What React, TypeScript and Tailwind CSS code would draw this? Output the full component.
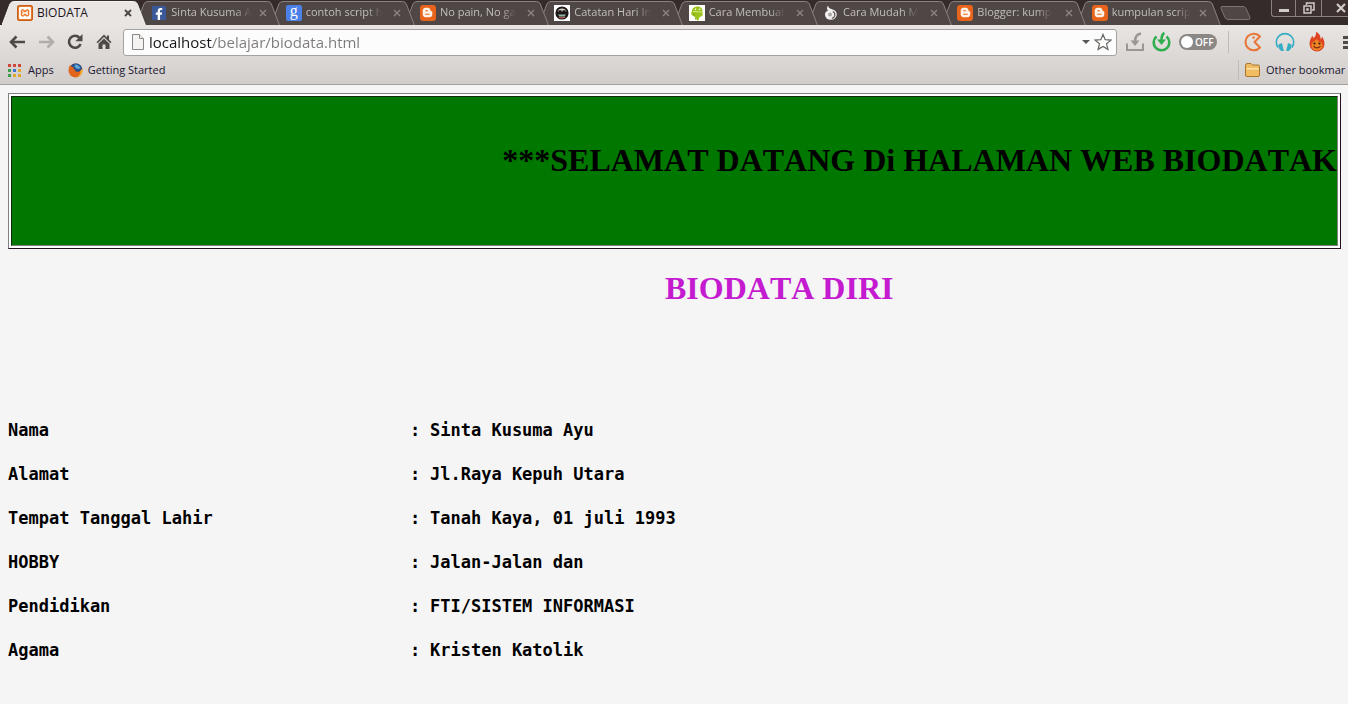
import type React from "react";
import { clsx } from "clsx";
import { FaBloggerB, FaFacebookF } from "react-icons/fa";
import { SiXampp } from "react-icons/si";

const BloggerIcon = () => (
  <span className="flex h-4 w-4 items-center justify-center rounded-[3px] bg-[#e8641b]">
    <FaBloggerB className="h-[11px] w-[11px] text-[#fdf3e8]" />
  </span>
);

const XamppIcon = () => (
  <span className="flex h-4 w-4 items-center justify-center rounded-[2px] border border-[#c8601a] bg-[#e8792d]">
    <SiXampp className="h-3 w-3 text-white" />
  </span>
);

const FacebookIcon = () => (
  <span className="flex h-[14px] w-[14px] items-end justify-center bg-[#3b5998]">
    <FaFacebookF className="h-3 w-3 text-white" />
  </span>
);

const GoogleIcon = () => (
  <span className="flex h-4 w-4 items-center justify-center rounded-[2px] bg-[#4a80e8] pb-1 font-['Liberation_Serif',serif] text-base leading-4 text-white">
    g
  </span>
);

const BadgeIcon = () => (
  <svg className="h-4 w-4" viewBox="0 0 16 16">
    <rect width="16" height="16" fill="#fff" />
    <circle cx="8" cy="8" r="6.6" fill="#1c1818" />
    <path d="M3.500 6.500c1-4 8-4 9 0z" fill="#d8d4c8" />
    <path d="M4.500 5.200h3v1.800h-3zM8.600 5.200h3v1.800h-3z" fill="#1c1818" />
    <path d="M4 9.500h8l-1.500 2h-5z" fill="#8fb5a8" />
    <path d="M5 12c2 1.300 4 1.300 6 0" stroke="#cc6655" strokeWidth="1.200" fill="none" />
  </svg>
);

const AndroidIcon = () => (
  <svg className="h-4 w-4" viewBox="0 0 16 16">
    <rect width="16" height="16" fill="#fff" />
    <path d="M3 6c0-3 2.500-4.500 5.500-4.500S13.500 3.500 13.500 6v5l-3 1-1 3.500-2-.5-.5-2.500L4 11 2 9z" fill="#9dc41c" />
    <path d="M4 6.500l9 .5" stroke="#d3e88a" strokeWidth="1" />
    <path d="M7 12l-.5 2.500M5 8v3" stroke="#7fa312" strokeWidth="1" />
    <circle cx="6.500" cy="4.300" r=".8" fill="#fff" />
    <circle cx="10.500" cy="4.300" r=".8" fill="#fff" />
  </svg>
);

const SwirlIcon = () => (
  <svg className="h-4 w-4" viewBox="0 0 16 16">
    <path d="M5 0.500c0 2.500 3 3.300 5.500 4.300C13 5.800 14 7.800 13.700 10A6 6 0 0 1 2 10.200C1.700 8 3 6.300 5 5.800 3.700 4.500 3.800 2 5 .5z" fill="#f2f0f0" />
    <path d="M9.800 6.500a3.600 3.600 0 0 1-1 6.800" stroke="#5a5553" strokeWidth="1.200" fill="none" />
    <circle cx="7" cy="9.500" r="2" fill="#aaa6a4" />
  </svg>
);

const tabs: { title: string; icon: React.ReactNode }[] = [
  { title: "BIODATA", icon: <XamppIcon /> },
  { title: "Sinta Kusuma A", icon: <FacebookIcon /> },
  { title: "contoh script h", icon: <GoogleIcon /> },
  { title: "No pain, No ga", icon: <BloggerIcon /> },
  { title: "Catatan Hari In", icon: <BadgeIcon /> },
  { title: "Cara Membuat", icon: <AndroidIcon /> },
  { title: "Cara Mudah M", icon: <SwirlIcon /> },
  { title: "Blogger: kump", icon: <BloggerIcon /> },
  { title: "kumpulan scrip", icon: <BloggerIcon /> },
];

const biodata = [
  ["Nama", "Sinta Kusuma Ayu"],
  ["Alamat", "Jl.Raya Kepuh Utara"],
  ["Tempat Tanggal Lahir", "Tanah Kaya, 01 juli 1993"],
  ["HOBBY", "Jalan-Jalan dan"],
  ["Pendidikan", "FTI/SISTEM INFORMASI"],
  ["Agama", "Kristen Katolik"],
];

function Tab({ title, icon, index }: { title: string; icon: React.ReactNode; index: number }) {
  const active = index === 0;

  return (
    <li className="relative min-w-0 flex-1" style={{ zIndex: tabs.length - index }}>
      {/* Slanted tab shape, overlaps the next tab */}
      <svg
        className="absolute -left-1 top-0 h-full w-[calc(100%+10px)]"
        viewBox="0 0 145 25"
        preserveAspectRatio="none"
      >
        <path
          d="M0 25 L8 4 Q9 1.500 12 1.500 H132 Q135 1.500 136 4 L144 25"
          fill={active ? "#e8e5e3" : "#4f4745"}
          stroke={active ? "#f4f2f1" : "#8a8380"}
          strokeWidth="1"
        />
      </svg>
      <div className="relative flex h-full items-center pl-[11px] pr-2">
        <span className="flex w-4 shrink-0 justify-center">{icon}</span>
        <span
          className={clsx(
            "ml-1 whitespace-nowrap text-[11px]",
            active
              ? "text-[12px] text-[#1c1420]"
              : "text-[#c4bebb] [mask-image:linear-gradient(to_right,black_80%,transparent)]"
          )}
        >
          {title}
        </span>
        <button aria-label={`Close ${title}`} className="ml-auto shrink-0">
          <svg className="h-2 w-2" viewBox="0 0 8 8">
            <path
              d="M1 1l6 6M7 1l-6 6"
              stroke={active ? "#4a4441" : "#8d8683"}
              strokeWidth={active ? 1.8 : 1.3}
            />
          </svg>
        </button>
      </div>
    </li>
  );
}

function TabStrip() {
  return (
    <div className="flex h-[25px] bg-[#352b2a] pl-[6px]">
      <ul className="flex min-w-0 flex-1">
        {tabs.map((tab, index) => (
          <Tab key={tab.title} title={tab.title} icon={tab.icon} index={index} />
        ))}
      </ul>
      <div className="flex w-[133px] shrink-0 items-start justify-between">
        <button aria-label="New tab" className="ml-1 mt-[5px]">
          <svg className="h-4 w-8" viewBox="0 0 32 16">
            <path d="M3 1.500h21q2 0 3 2l4 9q.5 2-1.500 2H9q-2 0-3-2l-4-9q-.5-2 1-2z" fill="#4f4745" stroke="#7d7572" />
          </svg>
        </button>
        <div className="flex h-[17px] w-[77px] overflow-hidden rounded-bl-[3px] border-b border-l border-[#8a8280] bg-[#3c3130]">
          <button aria-label="Minimize" className="flex w-6 shrink-0 items-center justify-center border-r border-[#8a8280]">
            <span className="mt-1 h-[3px] w-[10px] bg-[#d0cac8]" />
          </button>
          <button aria-label="Restore" className="flex w-[26px] shrink-0 items-center justify-center border-r border-[#8a8280]">
            <svg className="h-3 w-3" viewBox="0 0 12 12" fill="none" stroke="#d0cac8" strokeWidth="1.500">
              <path d="M3.500 3V1H11v7H9" />
              <path d="M1 4h7v7H1zM4 7h1v1H4z" />
            </svg>
          </button>
          <button aria-label="Close window" className="flex w-[38px] shrink-0 items-center justify-center">
            <svg className="h-[10px] w-[10px]" viewBox="0 0 10 10">
              <path d="M1 1l8 8M9 1l-8 8" stroke="#d0cac8" strokeWidth="2.200" />
            </svg>
          </button>
        </div>
      </div>
    </div>
  );
}

function Toolbar() {
  return (
    <div className="flex h-[34px] items-center pl-2">
      <div className="flex items-center gap-[11px]">
        <button aria-label="Back">
          <svg className="h-[18px] w-[18px]" viewBox="0 0 18 18" fill="none" stroke="#4f4a47" strokeWidth="2.600">
            <path d="M17 9H3.500M8.500 3.500L3 9l5.500 5.500" />
          </svg>
        </button>
        <button aria-label="Forward">
          <svg className="h-[18px] w-[18px]" viewBox="0 0 18 18" fill="none" stroke="#b0adab" strokeWidth="2.600">
            <path d="M2 9h13.500M10.500 3.500L16 9l-5.500 5.500" />
          </svg>
        </button>
        <button aria-label="Reload">
          <svg className="h-[18px] w-[18px]" viewBox="0 0 18 18">
            <path d="M13.500 4.800A6 6 0 1 0 14.600 11" fill="none" stroke="#4f4a47" strokeWidth="2.600" />
            <path d="M16.500 1v7.200H9.300z" fill="#4f4a47" />
          </svg>
        </button>
        <button aria-label="Home">
          <svg className="h-[18px] w-[18px]" viewBox="0 0 18 18" fill="#4f4a47">
            <path d="M9 1.500L1.500 9.200l1.200 1.100L9 4l6.300 6.300 1.200-1.100-2.500-2.600V2.500h-2v2z" />
            <path d="M9 5.500l-5.500 5.300V16h4v-4.500h3V16h4v-5.200z" />
          </svg>
        </button>
      </div>

      <div className="ml-[10px] flex h-[27px] min-w-0 flex-1 items-center rounded-[3px] border border-[#a5a19f] bg-[#fdfcfc] pl-2 pr-1">
        <svg className="mr-[5px] h-4 w-3 shrink-0" viewBox="0 0 12 16" fill="#f4f3f2" stroke="#8a8886">
          <path d="M.5.5h7l4 4v11H.5z" />
          <path d="M7.500.5v4h4" />
        </svg>
        <input
          type="text"
          aria-label="Address"
          defaultValue="localhost/belajar/biodata.html"
          className="min-w-0 flex-1 bg-[linear-gradient(to_right,#17171b_63px,#7c7a79_63px)] bg-clip-text text-[15px] leading-5 text-transparent outline-none"
        />
        <button aria-label="Show history" className="mr-1">
          <svg className="h-1 w-2" viewBox="0 0 8 4">
            <path d="M0 0h8L4 4z" fill="#5c5856" />
          </svg>
        </button>
        <button aria-label="Bookmark this page">
          <svg className="h-[18px] w-[18px]" viewBox="0 0 19 19" fill="#fff" stroke="#6b6866" strokeWidth="1.300">
            <path d="M9.500 1.500l2.300 5.600 6 .4-4.600 3.900 1.500 5.900-5.200-3.200-5.200 3.200 1.500-5.900L1.200 7.500l6-.4z" />
          </svg>
        </button>
      </div>

      <div className="flex shrink-0 items-center pl-[9px]">
        <button aria-label="Downloads">
          <svg className="h-5 w-[18px]" viewBox="0 0 18 20" fill="none" stroke="#9a9694" strokeWidth="2">
            <path d="M1 11.500V18h16v-6.500" />
            <path d="M15 1.500C11 2 9 5 9 10" strokeWidth="2.600" />
            <path d="M4.500 8.500h9L9 14z" fill="#9a9694" stroke="none" />
          </svg>
        </button>
        <button aria-label="Quick download" className="ml-2">
          <svg className="h-5 w-[19px]" viewBox="0 0 19 20" fill="none" stroke="#2fae4e" strokeWidth="2.600">
            <path d="M4.500 4.500A7.800 7.800 0 1 0 14.500 4.500" />
            <path d="M12.500 1C10 2 9.500 5 9.500 8" />
            <path d="M5 7.500h9l-4.500 5.500z" fill="#2fae4e" stroke="none" />
          </svg>
        </button>
        <label className="ml-2 flex h-4 w-[38px] items-center rounded-full bg-[#8a8785] pl-[2px] text-[10px] font-semibold text-white">
          <input type="checkbox" className="h-3 w-3 appearance-none rounded-full bg-white" />
          <span className="ml-[2px]">OFF</span>
        </label>
        <span className="ml-[11px] h-[22px] w-px bg-[#bfbcba]" />
        <button aria-label="Cut" className="ml-[14px]">
          <svg className="h-5 w-5" viewBox="0 0 20 20" fill="none" stroke="#e87537" strokeWidth="2">
            <path d="M17 4.500A8.300 8.300 0 1 0 17 15.500L11.500 10z" strokeLinejoin="round" />
            <circle cx="10.500" cy="5.500" r="1.200" fill="#e87537" stroke="none" />
          </svg>
        </button>
        <button aria-label="Music" className="ml-3">
          <svg className="h-5 w-5" viewBox="0 0 20 20">
            <path d="M3 15.500A8.700 8.700 0 1 1 17 15.500" fill="none" stroke="#35aec4" strokeWidth="1.600" />
            <path d="M3.500 12.500l3.500-1.500 1.800 8H6.500C4.500 18 3 15.500 3.500 12.500zM16.500 12.500L13 11l-1.800 8h2.300c2-1 3.500-3.500 3-6.500z" fill="#35aec4" />
          </svg>
        </button>
        <button aria-label="Hot" className="ml-3">
          <svg className="h-5 w-5" viewBox="0 0 20 20">
            <path d="M9 0c.5 3-1 4-2 6C6 5.500 5.500 4.500 5.500 3.500 3.500 6.500 2.500 9 2.500 12a7.500 7.500 0 0 0 15 0c0-3-1-5-2.500-7.500 0 1.200-.5 2.200-1.500 2.800C14 4 12 1 9 0z" fill="#de4322" />
            <path d="M9.500 7c0 1.500-4 2.500-5 5.500C4 16 6.800 18.500 10 18.500s6-2.500 5.500-6c-.5-1.500-1.500-2.500-2.500-3-.5 0-1 .5-1.500 1C12 9 11 8 9.500 7z" fill="#ee8426" />
            <circle cx="7.500" cy="11.500" r="1.100" fill="#3a1c10" />
            <circle cx="12.500" cy="11.500" r="1.100" fill="#3a1c10" />
            <path d="M6.500 14.200q3.500 3.500 7 0" fill="none" stroke="#7a2410" strokeWidth="1.200" />
          </svg>
        </button>
        <button aria-label="Menu" className="ml-4 flex w-[5px] flex-col gap-[2px]">
          <span className="h-[3px] bg-[#4f4a47]" />
          <span className="h-[3px] bg-[#4f4a47]" />
          <span className="h-[3px] bg-[#4f4a47]" />
        </button>
      </div>
    </div>
  );
}

function BookmarksBar() {
  return (
    <div className="flex h-[25px] items-center whitespace-nowrap pb-[3px] pl-2 text-[11px] text-[#1a1530]">
      <a href="#apps" className="flex items-center gap-[7px]">
        <svg className="h-[13px] w-[13px]" viewBox="0 0 13 13">
          <path d="M0 0h3v3H0zM5 0h3v3H5zM10 0h3v3h-3z" fill="#d0453c" />
          <path d="M0 5h3v3H0z" fill="#3d9c4f" />
          <path d="M5 5h3v3H5z" fill="#3f76cf" />
          <path d="M10 5h3v3h-3z" fill="#e0a52c" />
          <path d="M0 10h3v3H0z" fill="#3d9c4f" />
          <path d="M5 10h3v3H5zM10 10h3v3h-3z" fill="#e0a52c" />
        </svg>
        Apps
      </a>
      <a href="#getting-started" className="ml-[14px] flex items-center gap-[5px]">
        <svg className="h-[15px] w-[15px]" viewBox="0 0 15 15">
          <circle cx="7.500" cy="7.500" r="7" fill="#e2661c" />
          <path d="M3 2.500C4.500 1 6 .5 8 .5c3.500 0 6 2.500 6 6l-3.500 2.500L6 8z" fill="#24508f" />
          <path d="M7 1.500c3 0 5 2 5.500 4L9 6 6.500 3.500z" fill="#5fa8d8" />
          <path d="M1.200 2.500l2 1.700 2.800-.3-.7 2 2.700 1.200-2 1.400C7 10.500 9.500 10.500 11 9L8 13 1 9z" fill="#e2661c" />
          <path d="M14.500 6c.5 4.500-3 8.500-7 8.500 3.500-.8 5.500-4 5-7z" fill="#f8b32d" />
        </svg>
        Getting Started
      </a>
      <span className="ml-auto h-5 w-px bg-[#bfbcba]" />
      <a href="#other" className="ml-[6px] flex w-[103px] items-center gap-[6px]">
        <svg className="h-[14px] w-[15px] shrink-0" viewBox="0 0 15 14">
          <path d="M.5 3V12q0 1.500 1.500 1.500h11q1.500 0 1.500-1.500V3.500Q14.500 2 13 2H7.500L6 .5H2Q.5.5.5 3z" fill="#f0bd62" stroke="#a8762c" />
          <path d="M1.500 5h12v1.500h-12z" fill="#fbe3ac" />
        </svg>
        Other bookmar
      </a>
    </div>
  );
}

export default function App() {
  return (
    <div className="min-h-screen overflow-hidden bg-[#f6f5f5] font-['Open_Sans','Noto_Sans',sans-serif]">
      <header>
        <TabStrip />
        <div className="border-b border-[#a39f9d] bg-linear-to-b from-[#e8e5e3] to-[#d0cdcb]">
          <Toolbar />
          <BookmarksBar />
        </div>
      </header>

      <main className="pb-8 pl-2 pr-[7px] pt-2">
        {/* Banner with the old double table border */}
        <div className="border border-b-[#22101f] border-l-[#808080] border-r-[#22101f] border-t-[#808080] bg-white p-[2px]">
          <div className="flex h-[150px] items-center justify-end overflow-hidden border border-b-[#808080] border-l-[#0c2a0c] border-r-[#808080] border-t-[#0c2a0c] bg-[#007800] pb-[22px]">
            <p className="whitespace-nowrap font-['Liberation_Serif',serif] text-[32px] font-bold leading-9 text-black [font-kerning:none]">
              ***SELAMAT DATANG Di HALAMAN WEB BIODATAK
            </p>
          </div>
        </div>

        <h1 className="ml-[657px] mt-[21px] whitespace-nowrap font-['Liberation_Serif',serif] text-[32px] font-bold leading-9 text-[#c41bd0] [font-kerning:none]">
          BIODATA DIRI
        </h1>

        <table className="mt-[103px] font-['DejaVu_Sans_Mono',monospace] text-[17px] font-bold text-black">
          <tbody>
            {biodata.map(([label, value]) => (
              <tr key={label} className="h-11">
                <th scope="row" className="w-[402px] p-0 text-left">
                  {label}
                </th>
                <td className="w-5 p-0">:</td>
                <td className="p-0">{value}</td>
              </tr>
            ))}
          </tbody>
        </table>
      </main>
    </div>
  );
}
